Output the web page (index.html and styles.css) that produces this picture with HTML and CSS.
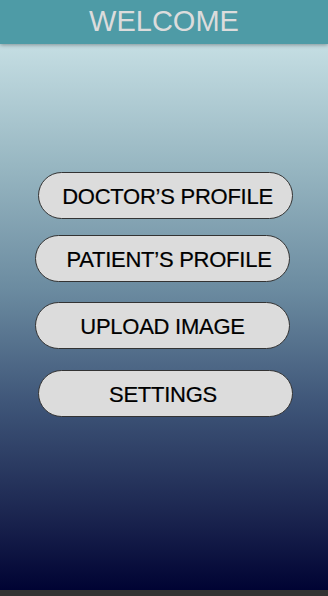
FILE: index.html
```html
<!DOCTYPE html>
<html lang="en">
<head>
  <meta charset="UTF-8" />
  <title>Welcome</title>
  <link rel="stylesheet" href="styles.css">
</head>
<body>
  <div class="screen">
    <header class="top-bar">WELCOME</header>

    <main class="menu">
      <button type="button" class="menu-btn btn-doctor">DOCTOR’S PROFILE</button>
      <button type="button" class="menu-btn btn-patient">PATIENT’S PROFILE</button>
      <button type="button" class="menu-btn btn-upload">UPLOAD IMAGE</button>
      <button type="button" class="menu-btn btn-settings">SETTINGS</button>
    </main>

    <div class="bottom-bar"></div>
  </div>
</body>
</html>
```

FILE: styles.css
```css
html, body {
  margin: 0;
  padding: 0;
  height: 100%;
}
body {
  font-family: "Liberation Sans", Arial, sans-serif;
  background: #333;
}
.screen {
  display: flex;
  flex-direction: column;
  height: 596px;
}
.top-bar {
  position: relative;
  z-index: 1;
  height: 44px;
  line-height: 42px;
  background: #4e9ba6;
  color: #dcdcdc;
  font-size: 29px;
  text-align: center;
  box-shadow: 0 1px 4px rgba(0,0,0,0.35);
}
.menu {
  flex: 1;
  display: flex;
  flex-direction: column;
  align-items: flex-start;
  padding-top: 128px;
  background: linear-gradient(to bottom, #c5dee3 0%, #98b7c2 22%, #6b8ba0 45%, #3e5578 66%, #18214c 88%, #000333 100%);
}
.menu-btn {
  width: 255px;
  height: 47px;
  border: 1px solid #333;
  border-radius: 24px;
  background: #dcdcdc;
  color: #000;
  font-family: "Liberation Sans", Arial, sans-serif;
  font-size: 22px;
  letter-spacing: -0.25px;
  -webkit-text-stroke: 0.2px #000;
  padding: 2px 0 0;
  white-space: nowrap;
}
.btn-doctor {
  margin-left: 38px;
  padding-left: 4px;
}
.btn-patient {
  margin-left: 35px;
  margin-top: 16px;
  padding-left: 13px;
}
.btn-upload {
  margin-left: 35px;
  margin-top: 20px;
}
.btn-settings {
  margin-left: 38px;
  margin-top: 21px;
  padding-right: 5px;
}
.bottom-bar {
  height: 6px;
  background: #333;
}
```
